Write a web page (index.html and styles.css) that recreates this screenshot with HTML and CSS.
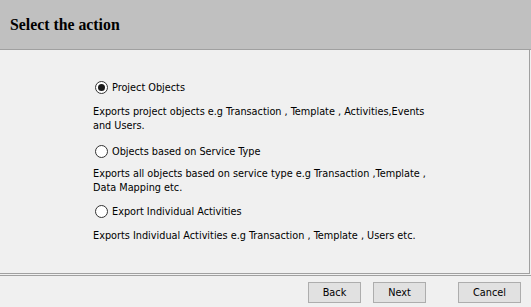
FILE: index.html
```html
<!DOCTYPE html>
<html>
<head>
<meta charset="utf-8">
<link rel="stylesheet" href="styles.css">
</head>
<body>
<div class="dialog">
  <div class="header"><h1 class="title">Select the action</h1></div>
  <div class="panel">
    <div class="options">
      <label class="option"><span class="radio checked"></span><span>Project Objects</span></label>
      <p class="desc">Exports project objects e.g Transaction , Template , Activities,Events<br>and Users.</p>
      <label class="option"><span class="radio"></span><span>Objects based on Service Type</span></label>
      <p class="desc desc-tight">Exports all objects based on service type e.g Transaction ,Template ,<br>Data Mapping etc.</p>
      <label class="option"><span class="radio"></span><span>Export Individual Activities</span></label>
      <p class="desc">Exports Individual Activities e.g Transaction , Template , Users etc.</p>
    </div>
  </div>
  <div class="separator"></div>
  <div class="buttons">
    <button class="btn">Back</button>
    <button class="btn">Next</button>
    <button class="btn btn-cancel">Cancel</button>
  </div>
</div>
</body>
</html>
```
FILE: styles.css
```css
html, body {
  margin: 0;
  padding: 0;
  background: #f0f0f0;
}
.dialog {
  width: 531px;
  height: 307px;
  display: flex;
  flex-direction: column;
  font-family: "DejaVu Sans Condensed", "DejaVu Sans", sans-serif;
  font-size: 10.8px;
  color: #000;
}
.header {
  height: 49px;
  background: #c0c0c0;
  border-bottom: 1px solid #a0a0a0;
  display: flex;
  align-items: center;
  padding-left: 10px;
  box-sizing: content-box;
}
.title {
  margin: 0;
  font-family: "Liberation Serif", serif;
  font-weight: bold;
  font-size: 15.8px;
}
.panel {
  flex: 0 0 auto;
  height: 224px;
  box-sizing: border-box;
  border-right: 1px solid #a0a0a0;
  border-bottom: 1px solid #a0a0a0;
  margin-right: 1px;
}
.options {
  padding: 30px 0 0 93px;
  display: flex;
  flex-direction: column;
}
.option {
  display: flex;
  align-items: center;
  gap: 4px;
  height: 14px;
  padding-left: 2px;
}
.radio {
  width: 11px;
  height: 11px;
  border: 1px solid #333;
  border-radius: 50%;
  background: #fff;
  display: flex;
  align-items: center;
  justify-content: center;
}
.radio.checked::after {
  content: "";
  width: 7px;
  height: 7px;
  border-radius: 50%;
  background: #1a1a1a;
}
.desc {
  margin: 11px 0 11px 0;
  line-height: 14px;
}
.desc-tight {
  margin: 9px 0 9px 0;
}
.separator {
  height: 1px;
  margin-top: 1px;
  background: #a0a0a0;
}
.buttons {
  display: flex;
  justify-content: flex-end;
  padding: 6px 10px 0 0;
}
.btn {
  height: 21px;
  width: 53px;
  margin: 0;
  padding: 0;
  background: #e1e1e1;
  border: 1px solid #adadad;
  font-family: "DejaVu Sans Condensed", "DejaVu Sans", sans-serif;
  font-size: 10.8px;
  color: #000;
  margin-left: 12px;
}
.btn-cancel {
  width: 63px;
  margin-left: 32px;
}
```
